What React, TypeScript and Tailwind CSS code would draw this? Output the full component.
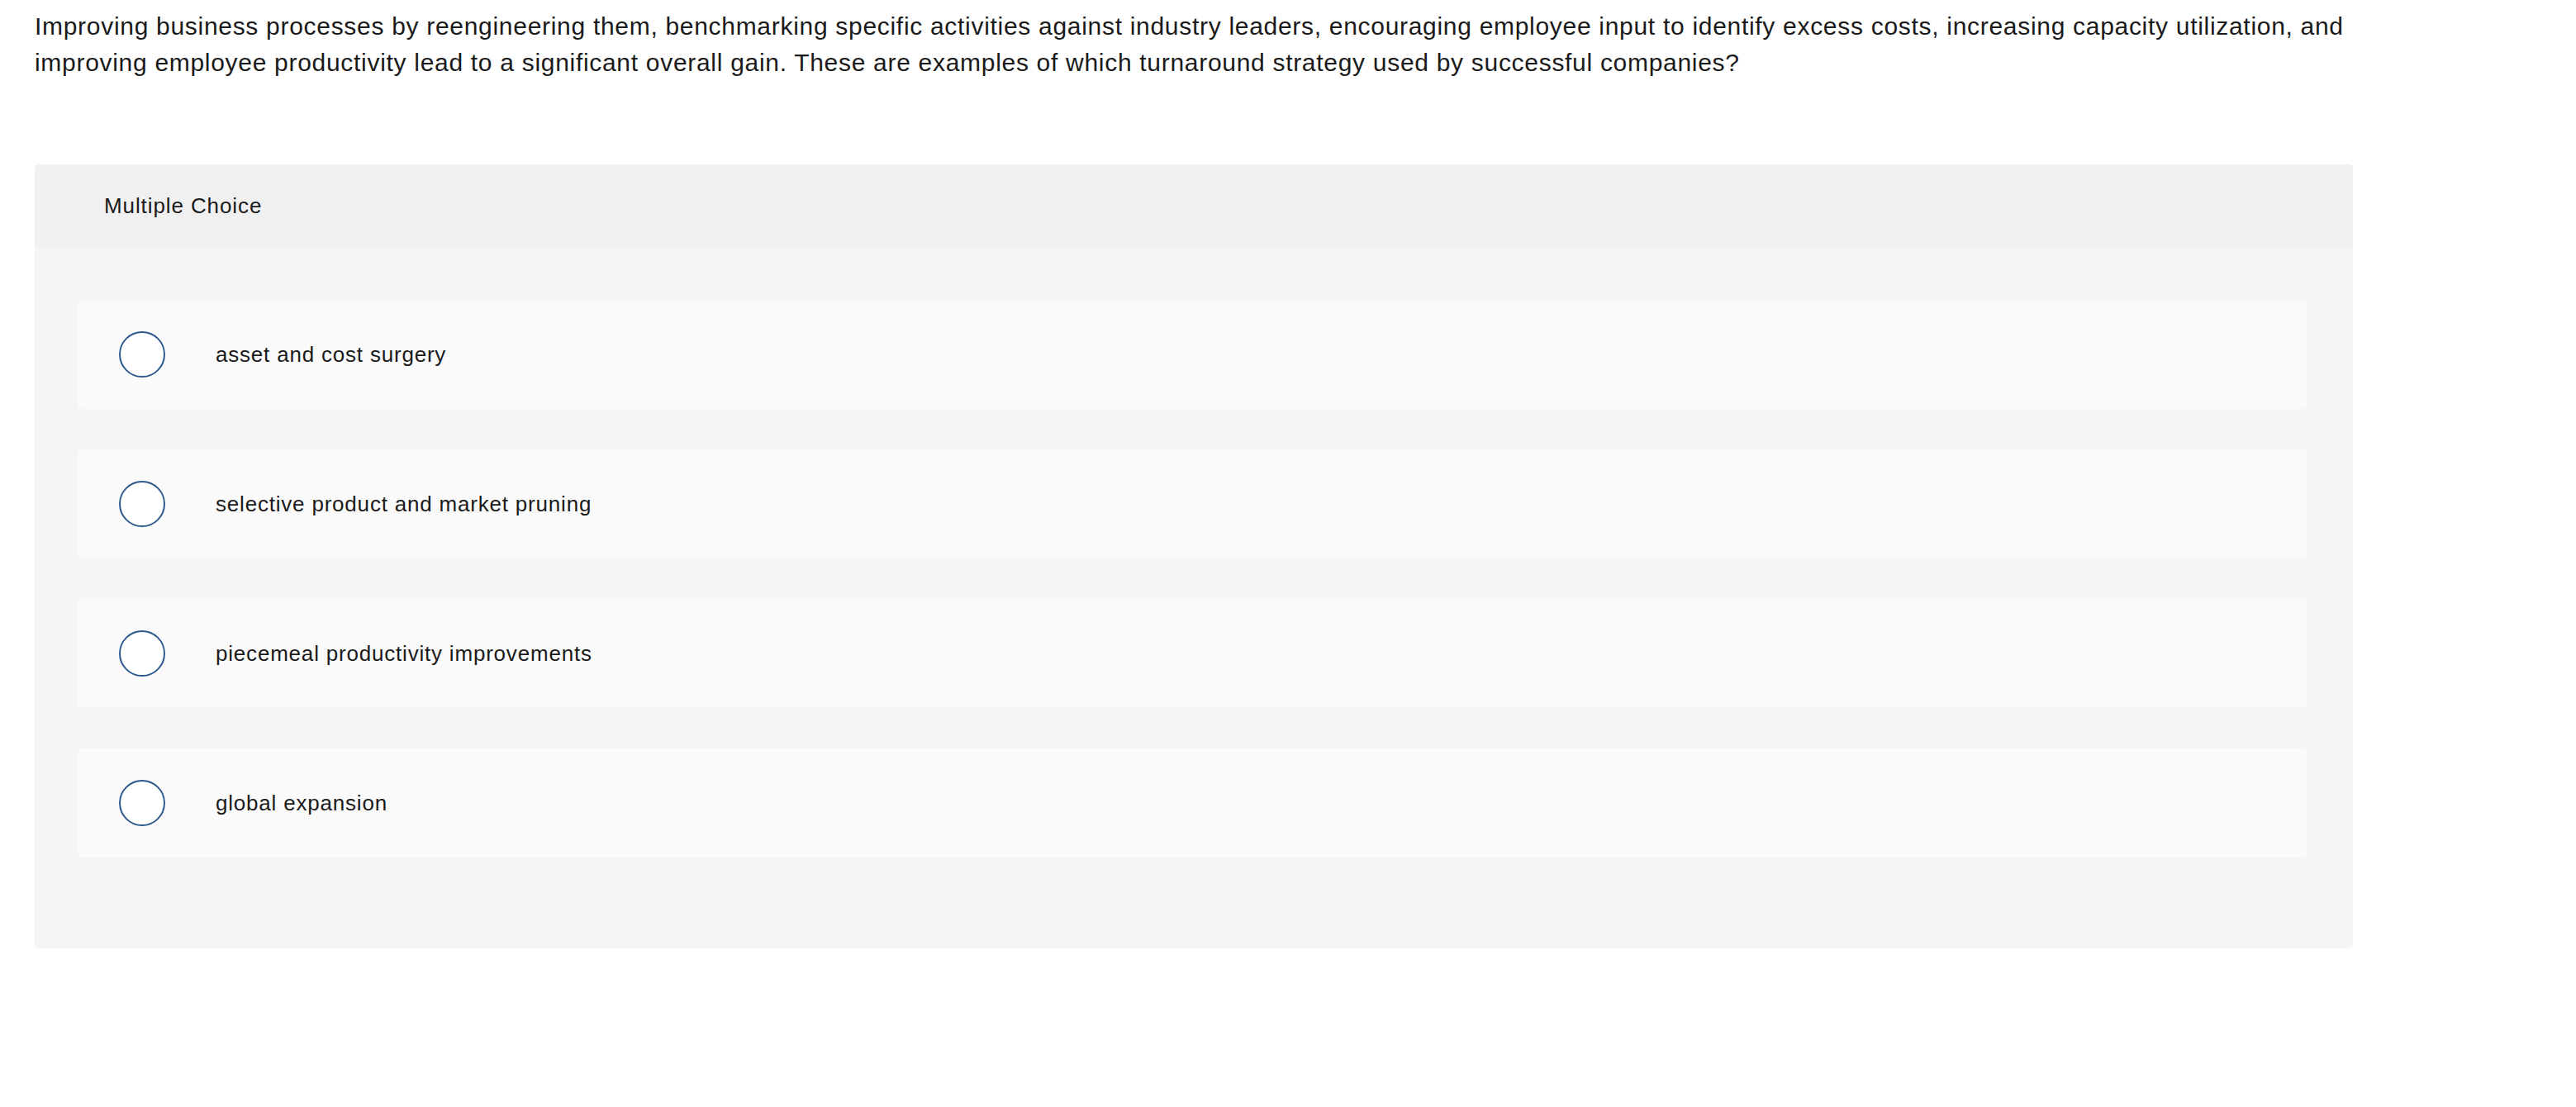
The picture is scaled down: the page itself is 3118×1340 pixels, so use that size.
import React from "react";

const options = [
  "asset and cost surgery",
  "selective product and market pruning",
  "piecemeal productivity improvements",
  "global expansion",
];

export default function App() {
  return (
    <div
      className="min-h-screen bg-white text-[#1a1a1a]"
      style={{ fontFamily: '"Liberation Sans", Arial, sans-serif' }}
    >
      <div className="pl-[42px] pt-[10px]">
        <p className="w-[2830px] text-[30px] leading-[44px] tracking-[0.7px]">
          Improving business processes by reengineering them, benchmarking specific activities against industry
          leaders, encouraging employee input to identify excess costs, increasing capacity utilization, and
          improving employee productivity lead to a significant overall gain. These are examples of which turnaround
          strategy used by successful companies?
        </p>

        <div className="w-[2806px] mt-[101px] rounded-[5px] bg-[#f5f5f5] overflow-hidden">
          <div className="h-[100px] bg-[#f0f0f0] flex items-center pl-[84px] text-[26px] tracking-[0.9px]">
            Multiple Choice
          </div>
          <div className="pl-[52px] pr-[56px] pt-[64px] pb-[110px] flex flex-col gap-[49px]">
            {options.map((opt) => (
              <label
                key={opt}
                className="h-[132px] rounded-[5px] bg-[#fafafa] flex items-center pl-[50px] cursor-pointer"
              >
                <span className="w-[56px] h-[56px] rounded-full border-2 border-[#2e5a8e] bg-white shrink-0" />
                <span className="ml-[61px] text-[26px] tracking-[0.8px]">{opt}</span>
              </label>
            ))}
          </div>
        </div>
      </div>
    </div>
  );
}
